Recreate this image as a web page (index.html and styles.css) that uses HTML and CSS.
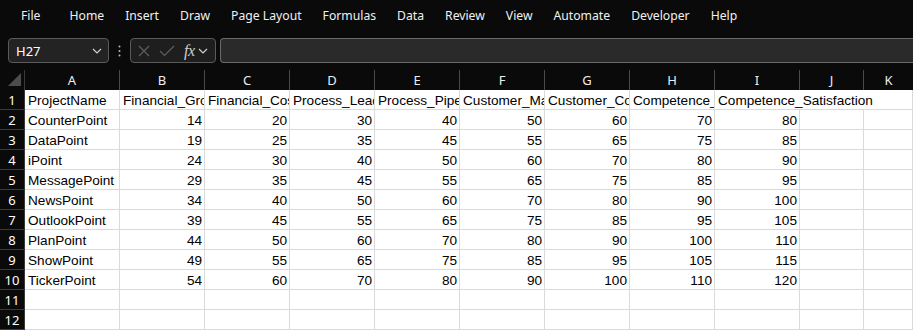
FILE: index.html
```html
<!DOCTYPE html>
<html lang="en">
<head>
    <meta charset="UTF-8">
    <title>Book1 - Excel</title>
    <link rel="stylesheet" href="styles.css">
</head>
<body>
    <nav class="menu">
        <span class="menu-item first">File</span>
        <span class="menu-item">Home</span>
        <span class="menu-item">Insert</span>
        <span class="menu-item">Draw</span>
        <span class="menu-item">Page Layout</span>
        <span class="menu-item">Formulas</span>
        <span class="menu-item">Data</span>
        <span class="menu-item">Review</span>
        <span class="menu-item">View</span>
        <span class="menu-item">Automate</span>
        <span class="menu-item">Developer</span>
        <span class="menu-item">Help</span>
    </nav>

    <div class="formula-bar">
        <div class="name-box">
            <span>H27</span>
            <svg class="chev" width="10" height="6" viewBox="0 0 10 6"><path d="M1 1l4 4 4-4" fill="none" stroke="#d0d0d0" stroke-width="1.2"/></svg>
        </div>
        <div class="grip">
            <svg width="3" height="12" viewBox="0 0 3 12"><circle cx="1.5" cy="1.5" r="1" fill="#bbb"/><circle cx="1.5" cy="6" r="1" fill="#bbb"/><circle cx="1.5" cy="10.5" r="1" fill="#bbb"/></svg>
        </div>
        <div class="fn-box">
            <svg width="12" height="12" viewBox="0 0 12 12"><path d="M1 1l10 10M11 1L1 11" stroke="#5e5e5e" stroke-width="1.2"/></svg>
            <svg width="16" height="12" viewBox="0 0 16 12"><path d="M1 6l4.5 4.5L15 1" fill="none" stroke="#5e5e5e" stroke-width="1.2"/></svg>
            <span class="fx">fx</span>
            <svg class="chev" width="10" height="6" viewBox="0 0 10 6"><path d="M1 1l4 4 4-4" fill="none" stroke="#d0d0d0" stroke-width="1.2"/></svg>
        </div>
        <div class="formula-input"></div>
    </div>

    <div class="sheet">
        <div class="corner">
            <svg width="13" height="13" viewBox="0 0 13 13"><path d="M13 0V13H0Z" fill="#4d4d4d"/></svg>
        </div>
        <div class="col-head">A</div>
        <div class="col-head">B</div>
        <div class="col-head">C</div>
        <div class="col-head">D</div>
        <div class="col-head">E</div>
        <div class="col-head">F</div>
        <div class="col-head">G</div>
        <div class="col-head">H</div>
        <div class="col-head">I</div>
        <div class="col-head">J</div>
        <div class="col-head last">K</div>

        <div class="row-head">1</div>
        <div class="cell">ProjectName</div>
        <div class="cell">Financial_Growth</div>
        <div class="cell">Financial_Cost</div>
        <div class="cell">Process_Leadtime</div>
        <div class="cell">Process_Pipeline</div>
        <div class="cell">Customer_Market</div>
        <div class="cell">Customer_Cost</div>
        <div class="cell">Competence_Training</div>
        <div class="cell spill">Competence_Satisfaction</div>
        <div class="cell spill"></div>
        <div class="cell"></div>

        <div class="row-head">2</div>
        <div class="cell">CounterPoint</div>
        <div class="cell num">14</div><div class="cell num">20</div><div class="cell num">30</div><div class="cell num">40</div>
        <div class="cell num">50</div><div class="cell num">60</div><div class="cell num">70</div><div class="cell num">80</div>
        <div class="cell"></div><div class="cell"></div>

        <div class="row-head">3</div>
        <div class="cell">DataPoint</div>
        <div class="cell num">19</div><div class="cell num">25</div><div class="cell num">35</div><div class="cell num">45</div>
        <div class="cell num">55</div><div class="cell num">65</div><div class="cell num">75</div><div class="cell num">85</div>
        <div class="cell"></div><div class="cell"></div>

        <div class="row-head">4</div>
        <div class="cell">iPoint</div>
        <div class="cell num">24</div><div class="cell num">30</div><div class="cell num">40</div><div class="cell num">50</div>
        <div class="cell num">60</div><div class="cell num">70</div><div class="cell num">80</div><div class="cell num">90</div>
        <div class="cell"></div><div class="cell"></div>

        <div class="row-head">5</div>
        <div class="cell">MessagePoint</div>
        <div class="cell num">29</div><div class="cell num">35</div><div class="cell num">45</div><div class="cell num">55</div>
        <div class="cell num">65</div><div class="cell num">75</div><div class="cell num">85</div><div class="cell num">95</div>
        <div class="cell"></div><div class="cell"></div>

        <div class="row-head">6</div>
        <div class="cell">NewsPoint</div>
        <div class="cell num">34</div><div class="cell num">40</div><div class="cell num">50</div><div class="cell num">60</div>
        <div class="cell num">70</div><div class="cell num">80</div><div class="cell num">90</div><div class="cell num">100</div>
        <div class="cell"></div><div class="cell"></div>

        <div class="row-head">7</div>
        <div class="cell">OutlookPoint</div>
        <div class="cell num">39</div><div class="cell num">45</div><div class="cell num">55</div><div class="cell num">65</div>
        <div class="cell num">75</div><div class="cell num">85</div><div class="cell num">95</div><div class="cell num">105</div>
        <div class="cell"></div><div class="cell"></div>

        <div class="row-head">8</div>
        <div class="cell">PlanPoint</div>
        <div class="cell num">44</div><div class="cell num">50</div><div class="cell num">60</div><div class="cell num">70</div>
        <div class="cell num">80</div><div class="cell num">90</div><div class="cell num">100</div><div class="cell num">110</div>
        <div class="cell"></div><div class="cell"></div>

        <div class="row-head">9</div>
        <div class="cell">ShowPoint</div>
        <div class="cell num">49</div><div class="cell num">55</div><div class="cell num">65</div><div class="cell num">75</div>
        <div class="cell num">85</div><div class="cell num">95</div><div class="cell num">105</div><div class="cell num">115</div>
        <div class="cell"></div><div class="cell"></div>

        <div class="row-head">10</div>
        <div class="cell">TickerPoint</div>
        <div class="cell num">54</div><div class="cell num">60</div><div class="cell num">70</div><div class="cell num">80</div>
        <div class="cell num">90</div><div class="cell num">100</div><div class="cell num">110</div><div class="cell num">120</div>
        <div class="cell"></div><div class="cell"></div>

        <div class="row-head">11</div>
        <div class="cell"></div><div class="cell"></div><div class="cell"></div><div class="cell"></div><div class="cell"></div>
        <div class="cell"></div><div class="cell"></div><div class="cell"></div><div class="cell"></div><div class="cell"></div><div class="cell"></div>

        <div class="row-head">12</div>
        <div class="cell"></div><div class="cell"></div><div class="cell"></div><div class="cell"></div><div class="cell"></div>
        <div class="cell"></div><div class="cell"></div><div class="cell"></div><div class="cell"></div><div class="cell"></div><div class="cell"></div>
    </div>
</body>
</html>
```

FILE: styles.css
```css
body {
    margin: 0;
    background: #0a0a0a;
    font-family: "Noto Sans", "Open Sans", sans-serif;
    color: #f0f0f0;
    overflow: hidden;
}
.menu {
    display: flex;
    align-items: center;
    gap: 21px;
    height: 30px;
    padding-left: 21px;
    font-size: 12.2px;
}
.menu-item.first {
    margin-right: 8px;
}
.formula-bar {
    display: flex;
    align-items: center;
    height: 25px;
    margin-top: 8px;
    padding-left: 8px;
}
.name-box {
    box-sizing: border-box;
    width: 101px;
    height: 25px;
    border: 1px solid #5a5a5a;
    border-radius: 4px;
    background: #232323;
    display: flex;
    align-items: center;
    justify-content: space-between;
    padding: 0 6px 0 7px;
    font-size: 13px;
    color: #fff;
}
.grip {
    width: 21px;
    display: flex;
    justify-content: center;
    align-items: center;
}
.fn-box {
    box-sizing: border-box;
    width: 86px;
    height: 25px;
    border: 1px solid #5a5a5a;
    border-radius: 4px;
    background: #1e1e1e;
    display: flex;
    align-items: center;
    gap: 9px;
    padding-left: 7px;
}
.fn-box .chev {
    margin-left: -6px;
}
.fx {
    font-family: "Liberation Serif", serif;
    font-style: italic;
    font-size: 16px;
    color: #cfcfcf;
    letter-spacing: -0.5px;
    line-height: 1;
}
.formula-input {
    flex: 1;
    box-sizing: border-box;
    height: 25px;
    margin-left: 4px;
    border: 1px solid #6a6a6a;
    border-right: none;
    border-radius: 4px 0 0 4px;
    background: #2a2a2a;
}
.sheet {
    margin-top: 7px;
    display: grid;
    grid-template-columns: 25px 95px repeat(8, 85px) 64px 1fr;
    grid-auto-rows: 20px;
    background: #fff;
}
.corner {
    background: #0a0a0a;
    display: flex;
    justify-content: flex-end;
    align-items: flex-end;
    padding: 0 3px 4px 0;
    border-right: 1px solid #3a3a3a;
}
.corner, .col-head, .row-head, .cell {
    box-sizing: border-box;
}
.col-head {
    background: #0a0a0a;
    border-right: 1px solid #4a4a4a;
    font-size: 13px;
    color: #eee;
    text-align: center;
    line-height: 20px;
}
.col-head.last {
    border-right: none;
}
.row-head {
    background: #0a0a0a;
    border-bottom: 1px solid #3a3a3a;
    border-right: 1px solid #3a3a3a;
    font-size: 13px;
    color: #fff;
    text-align: center;
    line-height: 21px;
}
.cell {
    border-right: 1px solid #dadada;
    border-bottom: 1px solid #dadada;
    font-family: "Liberation Sans", Arial, sans-serif;
    font-size: 13.6px;
    color: #000;
    line-height: 22px;
    padding: 0 2px 0 3px;
    white-space: nowrap;
    overflow: hidden;
}
.cell.num {
    text-align: right;
}
.cell.spill {
    overflow: visible;
    border-right: none;
}
```
